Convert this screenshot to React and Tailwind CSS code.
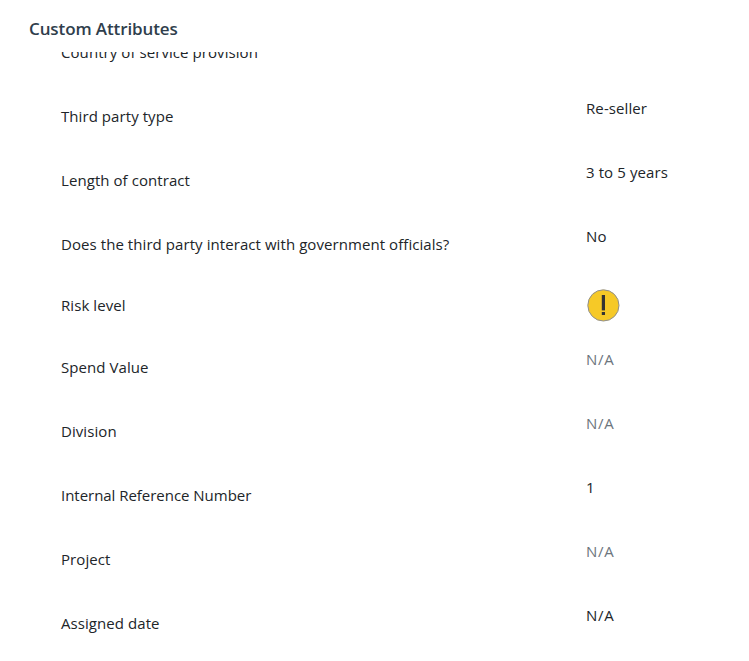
import React from "react";

const rows = [
  { label: "Country of service provision" },
  { label: "Third party type", value: "Re-seller" },
  { label: "Length of contract", value: "3 to 5 years" },
  { label: "Does the third party interact with government officials?", value: "No" },
  { label: "Risk level", risk: true },
  { label: "Spend Value", value: "N/A", muted: true },
  { label: "Division", value: "N/A", muted: true },
  { label: "Internal Reference Number", value: "1", tight: true },
  { label: "Project", value: "N/A", muted: true },
  { label: "Assigned date", value: "N/A" },
];

function RiskIcon() {
  return (
    <svg width="34" height="34" viewBox="0 0 34 34" className="mb-px block">
      <circle cx="17.4" cy="17.4" r="15.6" fill="#f6c927" stroke="#8f8f8f" strokeWidth="1" />
      <rect x="15.8" y="7" width="3.2" height="15.4" fill="#333333" />
      <rect x="15.8" y="24" width="3.2" height="3" fill="#333333" />
    </svg>
  );
}

function Row({ label, value, muted, risk, tight }) {
  return (
    <div className={`flex items-center pl-[61px] ${risk ? "h-[59px]" : "h-16"}`}>
      <div
        className={`w-[525px] shrink-0 whitespace-nowrap ${risk ? "pb-0.5" : ""} ${
          tight ? "tracking-[-0.03px]" : "tracking-[0.07px]"
        }`}
      >
        {label}
      </div>
      {risk ? (
        <RiskIcon />
      ) : (
        <div
          className={`pb-4 whitespace-nowrap ${muted ? "text-[#6c757d]" : ""} ${
            value === "N/A" ? "tracking-[0.7px]" : "tracking-[0.1px]"
          }`}
        >
          {value}
        </div>
      )}
    </div>
  );
}

export default function App() {
  return (
    <div className="flex h-[661px] w-[749px] flex-col overflow-hidden bg-white font-['Open_Sans','Noto_Sans',sans-serif] text-[15px] leading-6 text-[#212529]">
      <h2 className="h-[52px] shrink-0 pt-[17px] pl-[29px] text-[17px] font-semibold tracking-[-0.11px] text-[#2f3e4c]">
        Custom Attributes
      </h2>
      <div className="min-h-0 flex-1 overflow-hidden">
        <div className="-mt-8">
          {rows.map((row) => (
            <Row key={row.label} {...row} />
          ))}
        </div>
      </div>
    </div>
  );
}
